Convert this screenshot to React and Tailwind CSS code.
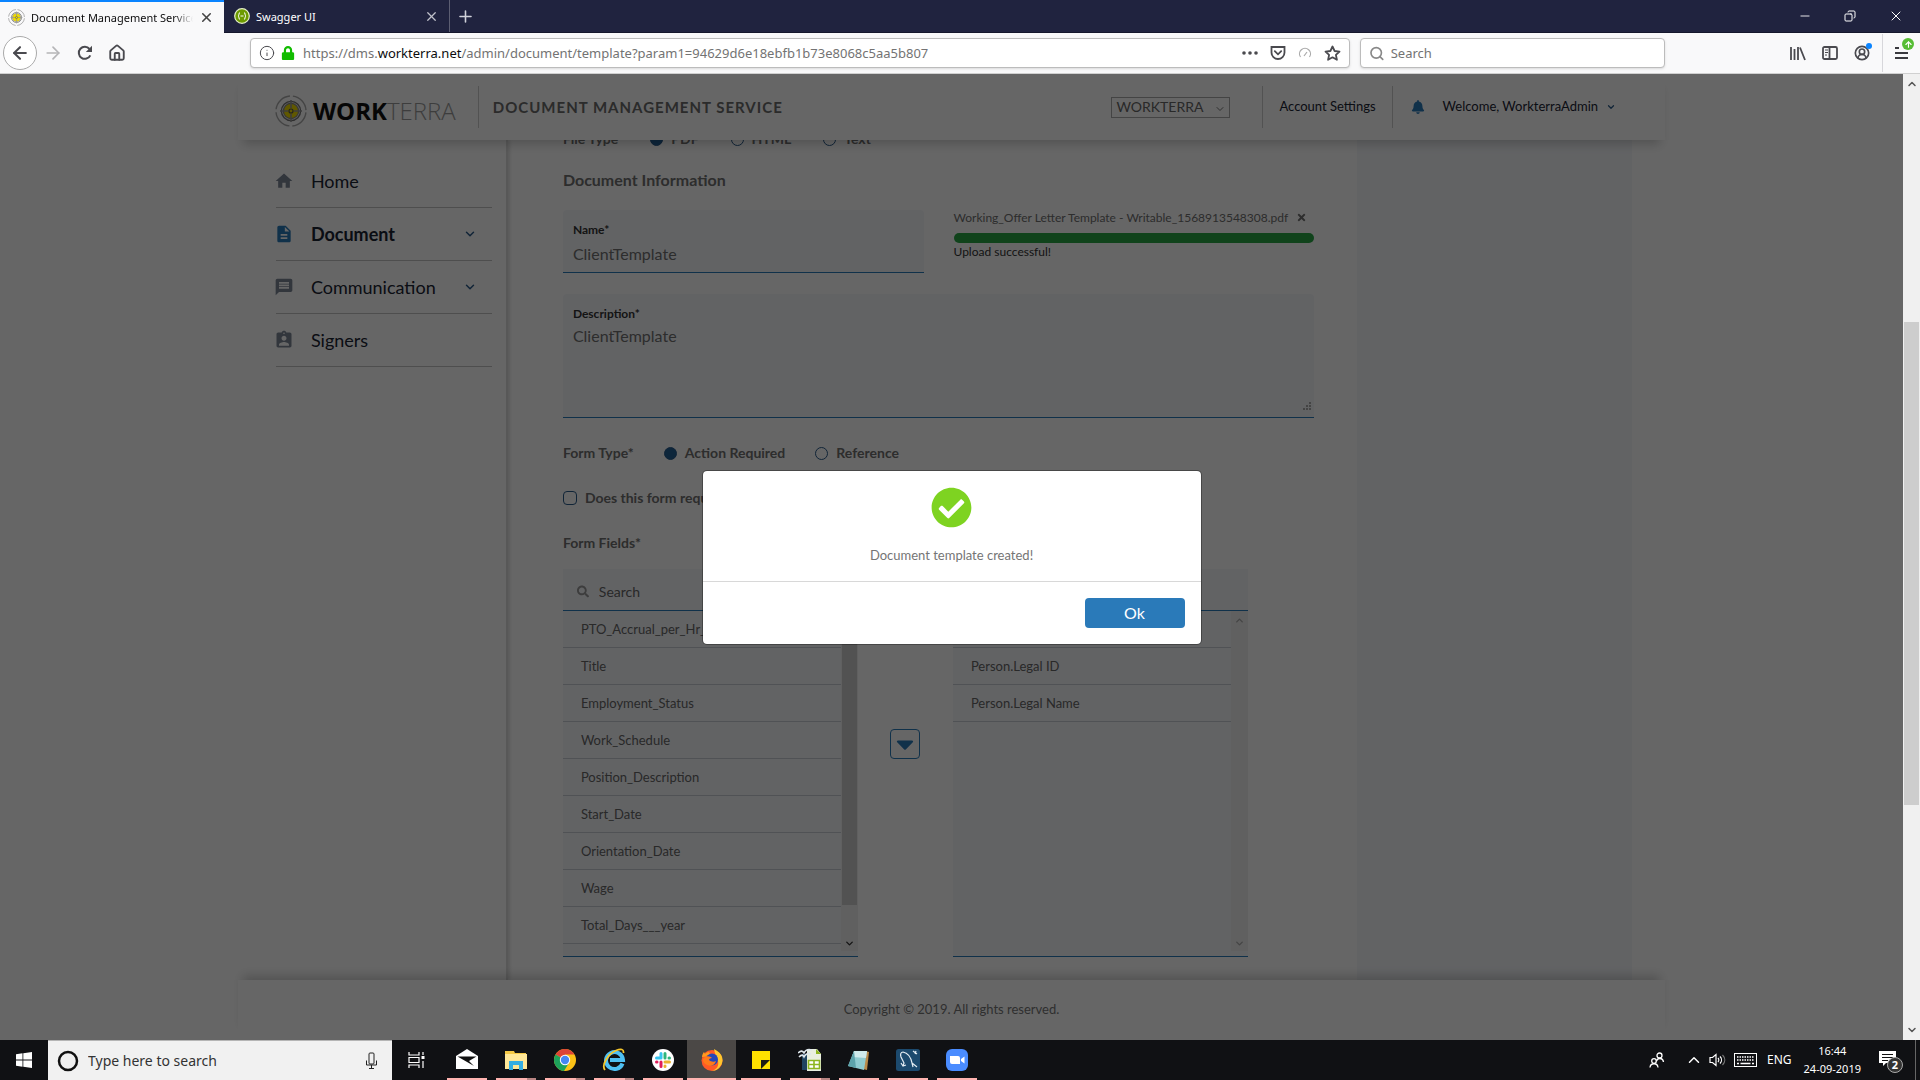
import { FaCheckCircle, FaBell, FaSearch, FaTimes, FaLock, FaCaretDown } from 'react-icons/fa'
import { MdHome, MdDescription, MdMessage, MdAssignmentInd } from 'react-icons/md'
import { ArrowLeft, ArrowRight, House, Plus, X, Info, Search, ChevronDown, ChevronUp, CircleUserRound, Minus, ArrowUp, Copy } from 'lucide-react'

const fields = ['PTO_Accrual_per_Hr_Worked', 'Title', 'Employment_Status', 'Work_Schedule', 'Position_Description', 'Start_Date', 'Orientation_Date', 'Wage', 'Total_Days___year']
const selected = ['Person.Email', 'Person.Legal ID', 'Person.Legal Name']

const menu = [
  { name: 'Home', icon: MdHome },
  { name: 'Document', icon: MdDescription, active: true, sub: true },
  { name: 'Communication', icon: MdMessage, sub: true },
  { name: 'Signers', icon: MdAssignmentInd },
]

function Target({ size, ring }) {
  return (
    <svg width={size} height={size} viewBox="0 0 32 32" fill="none" aria-hidden="true">
      <circle cx="16" cy="16" r="15" stroke={ring} strokeWidth="1.4" strokeDasharray="20.5 3.06" strokeDashoffset="-1.5" />
      <circle cx="16" cy="16" r="9.6" stroke="#777" strokeWidth="1.4" />
      <circle cx="16" cy="16" r="7.6" fill="#f0dc00" stroke="#888" strokeWidth="1.2" />
      <path d="M16 5v8M16 19v8M5 16h8M19 16h8" stroke="#999" strokeWidth="1.6" />
      <circle cx="16" cy="16" r="2" fill="#f0dc00" stroke="#555" strokeWidth="1.2" />
    </svg>
  )
}

function BrowserTabs() {
  return (
    <div className="flex h-[33px] shrink-0 items-stretch border-b border-[#15172c] bg-[#20233f] text-[11px]">
      <div className="-mb-px flex w-56 items-center gap-1.5 border-t-2 border-[#0a84ff] bg-[#f9f9fa] pl-2 pr-2.5 text-[#0c0c0d]">
        <Target size={17} ring="#999" />
        <span className="flex-1 overflow-hidden whitespace-nowrap pt-0.5 [mask-image:linear-gradient(to_right,black_88%,transparent)]">Document Management Service</span>
        <button aria-label="Close tab"><X size={15} strokeWidth={2.5} color="#444" /></button>
      </div>
      <div className="flex w-[226px] items-center gap-1.5 border-r border-[#5c5e72] pl-2.5 pr-2.5 text-white">
        <svg width="16" height="16" viewBox="0 0 16 16" fill="none" aria-hidden="true">
          <circle cx="8" cy="8" r="7.3" fill="#6d9a00" stroke="#e6f0c8" strokeWidth="1.2" />
          <path d="M6 4.5c-1.5 0-.5 3-2 3.500 1.500.5.5 3.500 2 3.500M10 4.500c1.500 0 .5 3 2 3.500-1.500.5-.5 3.500-2 3.500M6.500 8h3" stroke="#fff" />
        </svg>
        <span className="flex-1 pt-0.5">Swagger UI</span>
        <button aria-label="Close tab"><X size={15} strokeWidth={2} color="#c0c1ca" /></button>
      </div>
      <button aria-label="New tab" className="px-1.5 text-[#d0d1da]"><Plus size={19} strokeWidth={2} /></button>
      <div className="ml-auto flex items-center gap-8 pr-4 text-white">
        <button aria-label="Minimize"><Minus size={14} strokeWidth={1.5} /></button>
        <button aria-label="Restore"><Copy size={12} strokeWidth={2} className="-scale-x-100" /></button>
        <button aria-label="Close"><X size={16} strokeWidth={1.5} /></button>
      </div>
    </div>
  )
}

function BrowserBar() {
  return (
    <div className="flex h-[41px] shrink-0 items-center border-b border-[#d0d0d0] bg-[#f9f9fa] pl-[3px] text-[13px] text-[#4a4a4f]">
      <button aria-label="Back" className="flex size-[34px] items-center justify-center rounded-full border border-[#aaa] bg-white"><ArrowLeft size={20} strokeWidth={2.5} /></button>
      <button aria-label="Forward" className="ml-1.5 text-[#b5b5b7]"><ArrowRight size={20} /></button>
      <button aria-label="Reload" className="ml-3.5">
        <svg width="16" height="16" viewBox="0 0 16 16" fill="none" stroke="#4a4a4f" strokeWidth="2" aria-hidden="true">
          <path d="M13.300 10.300A6 6 0 1 1 12.500 4" />
          <path d="M15 .8V7H8.800z" fill="#4a4a4f" stroke="none" />
        </svg>
      </button>
      <button aria-label="Home page" className="ml-[15px]"><House size={18} strokeWidth={2.5} /></button>
      <div className="ml-[124px] flex h-[30px] flex-1 items-center rounded-sm border border-[#bcbcbc] bg-white px-2 shadow-sm">
        <Info size={16} strokeWidth={1.5} />
        <FaLock size={14} color="#12bc00" className="mx-1.5" />
        <div role="textbox" aria-label="Address" className="flex-1 pl-0.5 pt-0.5 text-[#737373]">
          https://dms.<span className="text-[#0c0c0d]">workterra.net</span>/admin/document/template?param1=94629d6e18ebfb1b73e8068c5aa5b807
        </div>
        <div className="flex items-center gap-3">
          <svg width="16" height="4" viewBox="0 0 16 4" fill="#4a4a4f" aria-hidden="true"><circle cx="2" cy="2" r="1.800" /><circle cx="8" cy="2" r="1.800" /><circle cx="14" cy="2" r="1.800" /></svg>
          <svg width="16" height="16" viewBox="0 0 16 16" fill="none" stroke="#4a4a4f" strokeWidth="1.800" aria-hidden="true">
            <path d="M1.500 2h13v5.500a6.500 6.500 0 0 1-13 0z" />
            <path d="M4.800 6.200 8 9.300l3.200-3.100" strokeLinecap="round" />
          </svg>
          <svg width="14" height="14" viewBox="0 0 14 14" fill="none" stroke="#aaa" strokeWidth="1.200" aria-hidden="true">
            <path d="M2.500 11a5.500 5.500 0 1 1 9 0M6 10l3-4" />
          </svg>
          <svg width="17" height="17" viewBox="0 0 17 17" fill="none" stroke="#4a4a4f" strokeWidth="1.800" strokeLinejoin="round" aria-hidden="true">
            <path d="m8.500 1.500 2.100 4.500 4.900.6-3.600 3.300 1 4.900-4.400-2.500-4.400 2.500 1-4.900L1.500 6.600l4.900-.6z" />
          </svg>
        </div>
      </div>
      <div className="ml-2.5 flex h-[30px] w-[305px] items-center gap-1.5 rounded-sm border border-[#bcbcbc] bg-white px-2 shadow-sm">
        <Search size={17} strokeWidth={2.5} color="#888" />
        <input aria-label="Search the web" placeholder="Search" className="w-full pt-0.5 outline-none placeholder:text-[#737373]" />
      </div>
      <div className="ml-[124px] flex items-center">
        <svg width="17" height="15" viewBox="0 0 17 15" fill="none" stroke="#4a4a4f" strokeWidth="1.800" aria-hidden="true">
          <path d="M2 1v13M5.500 3v11M9 1v13M11 1.500l5 12.500" />
        </svg>
        <svg width="16" height="14" viewBox="0 0 16 14" fill="none" stroke="#4a4a4f" strokeWidth="1.800" aria-hidden="true" className="ml-4">
          <rect x="1" y="1" width="14" height="12" rx="1.500" />
          <path d="M7.500 1v12" />
          <path d="M3 4h3M3 6.500h3M3 9h2" strokeWidth="1" />
        </svg>
        <span className="relative ml-4">
          <CircleUserRound size={16} strokeWidth={2.5} />
          <i className="absolute -right-0.5 -top-0.5 size-1.5 rounded-full bg-[#0a84ff]" />
        </span>
        <span className="relative ml-3 border-l border-[#d7d7db] py-3 pl-3 pr-3">
          <svg width="13" height="14" viewBox="0 0 13 14" fill="#3a3a3f" aria-hidden="true"><path d="M0 1h4v2H0zM0 6h13v2H0zM0 11h13v2H0z" /></svg>
          <i className="absolute right-1.5 top-1 flex size-3 items-center justify-center rounded-full bg-[#57bd35]"><ArrowUp size={9} strokeWidth={3} color="#fff" /></i>
        </span>
      </div>
    </div>
  )
}

function Header() {
  return (
    <header className="relative z-10 flex h-[66px] items-center bg-white pl-[37px] shadow-[0_9px_10px_-5px_rgba(0,0,0,0.2)]">
      <div className="flex items-center pt-2">
        <Target size={32} ring="#aaa" />
        <span className="ml-1.5 font-['Open_Sans',sans-serif] text-2xl leading-8 text-[#999]"><b className="text-[#111]">WORK</b><span className="font-light">TERRA</span></span>
      </div>
      <h1 className="ml-[22px] flex h-[42px] items-center border-l border-[#ccc] pl-3.5 text-[15px] font-bold tracking-[1px] text-[#6b6b6b]">DOCUMENT MANAGEMENT SERVICE</h1>
      <div className="ml-auto flex items-center pr-[49px] text-[13px] text-[#1b2433]">
        <span className="relative mr-8">
          <select aria-label="Client" className="block h-[21px] w-[119px] appearance-none border border-[#aaa] px-1 text-sm leading-none text-[#666]">
            <option>WORKTERRA</option>
          </select>
          <ChevronDown size={12} color="#777" className="absolute right-1 top-1.5" />
        </span>
        <a href="#account" className="flex h-[42px] items-center border-x border-[#ccc] px-4">Account Settings</a>
        <FaBell size={14} color="#2a7ab9" className="ml-[18px]" />
        <button className="ml-[18px] flex items-center gap-2">Welcome, WorkterraAdmin <ChevronDown size={10} color="#2a5a8a" strokeWidth={3} /></button>
      </div>
    </header>
  )
}

function Sidebar() {
  return (
    <nav className="w-[270px] shrink-0 border-r-2 border-[#ddd] pl-[38px] pr-3.5 pt-[15px] shadow-[2px_0_3px_rgba(0,0,0,0.12)]">
      {menu.map(m => (
        <a key={m.name} href={`#${m.name}`} className={`flex h-[53px] items-center border-b border-[#c4c4c4] text-lg text-[#1b2433] ${m.active ? 'font-bold' : ''}`}>
          <m.icon size={20} color={m.active ? '#2a7ab9' : '#7d8797'} className="-ml-0.5" />
          <span className="ml-[17px] flex-1">{m.name}</span>
          {m.sub && <ChevronDown size={14} color="#2a5a8a" strokeWidth={2.5} className="mr-[15px]" />}
        </a>
      ))}
    </nav>
  )
}

function Radio({ name, label, checked }) {
  return (
    <label className="flex items-center gap-2">
      <input type="radio" name={name} defaultChecked={checked} className="size-[13px] appearance-none rounded-full border border-[#2a5a8a] checked:bg-[#215f95]" />
      {label}
    </label>
  )
}

function FieldList({ label, items, thumb }) {
  return (
    <div className="w-[295px] bg-[#f5f7fb]">
      <div className="flex h-[42px] items-center gap-2.5 border-b border-[#2a7ab9] pl-3.5 pt-1">
        <FaSearch size={13} color="#999" />
        <input aria-label={label} placeholder="Search" className="w-full text-sm outline-none placeholder:text-[#666]" />
      </div>
      <div className="flex h-[346px] border-b border-[#2a7ab9] pb-[5px]">
        <ul className="flex-1 overflow-hidden text-[13px] text-[#666]">
          {items.map(f => <li key={f} className="flex h-[37px] items-center border-b border-[#c8ccd4] pl-[18px]">{f}</li>)}
        </ul>
        <div className="flex w-[17px] flex-col items-center bg-[#f0f0f0]">
          <ChevronUp size={11} strokeWidth={3} color="#aaa" className="my-1 shrink-0" />
          {thumb && <div className="h-[275px] w-[15px] shrink-0 bg-[#cdcdcd]" />}
          <ChevronDown size={11} strokeWidth={3} color={thumb ? '#333' : '#aaa'} className="mb-0.5 mt-auto shrink-0" />
        </div>
      </div>
    </div>
  )
}

function TemplateForm() {
  return (
    <form className="-mt-[11px] min-w-0 flex-1 pl-[55px] pr-[43px] text-sm text-[#707070]">
      <div className="flex h-5 items-center gap-8 font-bold">
        <span>File Type</span>
        <Radio name="file" label="PDF" checked />
        <Radio name="file" label="HTML" />
        <Radio name="file" label="Text" />
      </div>
      <h2 className="mt-[19px] text-base font-bold leading-6">Document Information</h2>
      <div className="mt-[18px] grid grid-cols-2 gap-[30px]">
        <label className="flex h-[63px] min-w-0 flex-col rounded-t border-b border-[#2a7ab9] bg-[#f5f7fb] px-2.5 pt-3">
          <span className="text-xs font-bold leading-4 text-[#333]">Name*</span>
          <input defaultValue="ClientTemplate" className="h-[31px] w-full text-base outline-none" />
        </label>
        <div className="min-w-0 text-xs">
          <p className="flex h-[15px] items-center gap-2 whitespace-nowrap">Working_Offer Letter Template - Writable_1568913548308.pdf <button type="button" aria-label="Remove file"><FaTimes size={11} /></button></p>
          <div className="mt-2 h-2.5 rounded-full bg-[#28a745]" />
          <p className="mt-px h-4 text-[#333]">Upload successful!</p>
        </div>
      </div>
      <label className="relative mt-[21px] flex h-[124px] flex-col rounded-t border-b border-[#2a7ab9] bg-[#f5f7fb] px-2.5 pt-3">
        <span className="text-xs font-bold leading-4 text-[#333]">Description*</span>
        <textarea defaultValue="ClientTemplate" className="mt-0.5 w-full flex-1 resize-none text-base leading-6 outline-none" />
        <svg width="9" height="9" viewBox="0 0 9 9" fill="#aaa" aria-hidden="true" className="absolute bottom-1.5 right-0.5">
          <path d="M6 0h2v2H6zM6 3h2v2H6zM6 6h2v2H6zM3 3h2v2H3zM3 6h2v2H3zM0 6h2v2H0z" />
        </svg>
      </label>
      <div className="mt-[25px] flex h-5 items-center gap-[30px] font-bold">
        <span>Form Type*</span>
        <Radio name="type" label="Action Required" checked />
        <Radio name="type" label="Reference" />
      </div>
      <label className="mt-[25px] flex h-5 items-center gap-2 font-bold">
        <input type="checkbox" className="size-[14px] appearance-none rounded-sm border border-[#2a5a8a]" />
        Does this form require signature?
      </label>
      <h3 className="mt-[25px] font-bold leading-5">Form Fields*</h3>
      <div className="mt-4 flex">
        <FieldList label="Search fields" items={fields} thumb />
        <div className="flex w-[95px] items-center justify-center">
          <button type="button" aria-label="Map fields" className="mb-[38px] flex size-[30px] items-center justify-center rounded-sm border border-[#2a7ab9] text-[#2a7ab9]"><FaCaretDown size={28} /></button>
        </div>
        <FieldList label="Search mapped fields" items={selected} />
      </div>
    </form>
  )
}

function Dialog() {
  return (
    <div className="absolute inset-0 z-20 flex items-start justify-center bg-black/60">
      <div role="dialog" aria-label="Document template created" className="mt-[396px] w-[500px] rounded-[5px] border border-black/30 bg-white bg-clip-padding text-[#757575]">
        <div className="flex h-[111px] flex-col items-center border-b border-[#d8d8d8] pt-4">
          <FaCheckCircle size={41} color="#7ed321" />
          <p className="mt-[17px] text-[13px] leading-5">Document template created!</p>
        </div>
        <div className="flex justify-end px-4 py-4">
          <button className="h-[30px] w-[100px] rounded-[4px] bg-[#2a7ab9] text-base text-white">Ok</button>
        </div>
      </div>
    </div>
  )
}

const apps = [
  {
    name: 'Mail', open: 1,
    icon: <><path d="M1 8 12 1l11 7v13H1z" fill="#fff" /><path d="M2.500 8.500h19L14 13l5 5z" fill="#111" /></>,
  },
  {
    name: 'File Explorer', open: 2,
    icon: <><path d="M1 3h9l1 2h11v16H1z" fill="#f5c945" /><path d="M1 6h22v15H1z" fill="#ffe797" /><path d="M5 13h14v9h-4v-5H9v5H5z" fill="#35aee2" /></>,
  },
  {
    name: 'Chrome', open: 2,
    icon: <><circle cx="12" cy="12" r="11" fill="#fbc116" /><path d="M12 12 2.500 6.500A11 11 0 0 1 21.500 6.500H12z" fill="#dc4437" /><path d="M12 12 2.500 6.500A11 11 0 0 0 11 23l5.500-9z" fill="#1da25a" /><circle cx="12" cy="12" r="5.200" fill="#fff" /><circle cx="12" cy="12" r="4.200" fill="#4587f4" /></>,
  },
  {
    name: 'Internet Explorer', open: 2,
    icon: <><path d="M20.500 15.500A8.500 8.500 0 1 1 21 12H8" fill="none" stroke="#4fc0f2" strokeWidth="4" /><path d="M3 22C-1 17 6 6 14 2.500c5-2 8-1.500 7.500 2.500" fill="none" stroke="#f6c62b" strokeWidth="1.800" /></>,
  },
  {
    name: 'Slack', open: 1,
    icon: <><circle cx="12" cy="12" r="11" fill="#fff" /><g strokeWidth="3" strokeLinecap="round"><path d="M10 5.500V10M5.500 10H10" stroke="#36c5f0" /><path d="M14 5.500V10M18.500 10h-.5" stroke="#2eb67d" /><path d="M14 14h4.500M14 18.500v-.5" stroke="#ecb22e" /><path d="M10 14v4.500M5.500 14H6" stroke="#e01e5a" /></g></>,
  },
  {
    name: 'Firefox', open: 1, active: true,
    icon: <><circle cx="12" cy="12.500" r="10.500" fill="#ff5a26" /><path d="M14 1c6 3 9 7 8.500 12S17 23 12 23c5-2 7-5 6-10s-3-6-4-12" fill="#ffc62e" /><path d="M2 9C2 6 4 4 4 4l1 2c2-2 4-2 4-2l2 4z" fill="#ff9a1f" /><circle cx="12" cy="11.500" r="6" fill="#2547b8" /><path d="M3 11c3-4 7-3 9-1-2 0-3 1-3 2 2 2 5 2 7 1-1 4-5 6-9 4s-4-4-4-6" fill="#ff7a1a" /></>,
  },
  {
    name: 'Sticky Notes', open: 1,
    icon: <><path d="M3 3h18v10l-8 8H3z" fill="#ffe100" /><path d="M21 12v9h-9z" fill="#ffe100" /><path d="M12 21v-9h9z" fill="#1c1c14" /></>,
  },
  {
    name: 'OpenOffice Calc', open: 2,
    icon: <><path d="M4 6h9v16H4z" fill="#1f4460" /><path d="M9 1h10l4 5v17H9z" fill="#e9efe0" /><path d="M18 1v5h5z" fill="#8db61f" /><path d="M10.500 12.500h11v8h-11zM16 12.500v8M10.500 16.500h11" stroke="#8db61f" strokeWidth="1.600" fill="#fff" /><path d="M0 5c3-3 5-2 6 0 2-4 5-4 8-3M1 9c3-3 4-2 5 0 2-4 4-4 7-3" stroke="#dfe7ec" strokeWidth="1.600" fill="none" /></>,
  },
  {
    name: 'Notepad', open: 1,
    icon: <><path d="m18 3 4 1-2 18-4-1z" fill="#b98a4a" /><path d="M7 3h13l-3 19L1 18z" fill="#8fcbd0" /><path d="M7 3h13l-1 7L5 9z" fill="#cfeaec" /><path d="m7 3-6 15 8 2z" fill="#5da3ab" /></>,
  },
  {
    name: 'MySQL Workbench', open: 1,
    icon: <><rect x="0" y="1" width="24" height="22" rx="2.500" fill="#1c4a6e" /><path d="M7 18 8 15 5 9c-1-3 0-5 2-5 5 1 8 6 9 11l5 4M5 15l2 3 3-1M16 15l1 4M17 3l4 3M20 3l-1 3" stroke="#e4edf3" strokeWidth="1.200" fill="none" /></>,
  },
  {
    name: 'Zoom', open: 1,
    icon: <><rect x="1" y="1" width="22" height="22" rx="6" fill="#4a8cff" /><path d="M5 8h8a2 2 0 0 1 2 2v6H7a2 2 0 0 1-2-2zM16 11l3.500-2.500v7L16 13z" fill="#fff" /></>,
  },
]

function Taskbar() {
  return (
    <footer className="flex h-10 shrink-0 items-stretch bg-[#101114] text-xs text-white">
      <button aria-label="Start" className="flex w-12 items-center justify-center">
        <svg width="16" height="16" viewBox="0 0 16 16" fill="#fff" aria-hidden="true"><path d="M0 2.200 6.500 1.300v6.300H0zM7.300 1.200 16 0v7.600H7.300zM0 8.400h6.500v6.300L0 13.800zM7.300 8.400H16V16l-8.700-1.200z" /></svg>
      </button>
      <div className="flex w-[344px] items-center border-t border-[#b5b5b5] bg-[#f1f1f1] pl-2 pr-3.5">
        <svg width="24" height="24" viewBox="0 0 24 24" fill="none" aria-hidden="true"><circle cx="12" cy="12" r="9" stroke="#111" strokeWidth="2.500" /></svg>
        <input aria-label="Type here to search" placeholder="Type here to search" className="ml-2 flex-1 text-sm outline-none placeholder:text-[#333]" />
        <svg width="13" height="18" viewBox="0 0 13 18" fill="none" stroke="#222" aria-hidden="true"><rect x="4" y="1" width="5" height="11" rx="1" /><path d="M1.500 8.500V13h10V8.500M6.500 13v3.500M4 16.500h5" /></svg>
      </div>
      <button aria-label="Task view" className="flex w-[50px] items-center justify-center">
        <svg width="18" height="18" viewBox="0 0 18 18" fill="none" stroke="#fff" strokeWidth="1.200" aria-hidden="true"><path d="M1 1v3h10V1M1 17v-3h10v3M1 6.500h10v5H1zM15 1v3M15 10v7" /><path d="M13.500 5h3v3h-3z" fill="#fff" stroke="none" /></svg>
      </button>
      {apps.map(a => (
        <button key={a.name} aria-label={a.name} className={`flex w-[49px] flex-col items-center ${a.active ? 'bg-[#4b4846]' : ''}`}>
          <svg width="24" height="24" viewBox="0 0 24 24" fill="none" className="mt-2" aria-hidden="true">{a.icon}</svg>
          <span className={`mt-auto flex h-0.5 ${a.active ? 'w-full' : 'w-10'}`}>
            <i className="flex-1 bg-[#ffb3b0]" />
            {a.open === 2 && <i className="w-[9px] bg-[#b98583]" />}
          </span>
        </button>
      ))}
      <div className="ml-auto flex items-center">
        <svg width="16" height="16" viewBox="0 0 16 16" fill="none" stroke="#fff" strokeWidth="1.300" aria-hidden="true"><circle cx="10.500" cy="3.500" r="2.500" /><path d="M7.500 9c1-3.500 6.500-3.500 7 1" /><circle cx="5" cy="9" r="2.300" /><path d="M1 15.500c.5-5 7.500-5 8 0" /></svg>
        <ChevronUp size={18} strokeWidth={2} className="ml-5" />
        <svg width="17" height="14" viewBox="0 0 17 14" fill="none" stroke="#fff" strokeWidth="1.200" className="ml-1.5" aria-hidden="true"><path d="M1 4.500h2.500L7 1.500v11l-3.500-3H1zM9 5c1 1 1 3 0 4M11 3.500c2 2 2 5 0 7" /><path d="M13.500 2c3 3 3 7 0 10" stroke="#777" /></svg>
        <svg width="23" height="14" viewBox="0 0 23 14" fill="none" stroke="#fff" className="ml-2" aria-hidden="true"><rect x=".5" y=".5" width="22" height="13" /><path d="M3 4h17M3 7h17" strokeDasharray="1.500 1" strokeWidth="1.300" /><path d="M3 10.500h2M6.500 10.500h10M18 10.500h2" strokeWidth="1.300" /></svg>
        <span className="ml-2.5">ENG</span>
        <span className="ml-3 flex flex-col items-center text-[11px] leading-[18px]"><span>16:44</span><span>24-09-2019</span></span>
        <span className="relative ml-[18px] mr-3">
          <svg width="24" height="26" viewBox="0 0 24 26" fill="none" aria-hidden="true"><path d="M0 4h17v12H7l-3 3v-3H0z" fill="#fff" /><path d="M3 7.500h11M3 10.500h11M3 13.500h6" stroke="#111" strokeWidth="1.200" /></svg>
          <i className="absolute bottom-0 right-0 flex size-4 items-center justify-center rounded-full border border-[#aaa] bg-[#333] text-[11px] font-bold not-italic">2</i>
        </span>
        <div className="h-full w-[5px] border-l border-[#666]" />
      </div>
    </footer>
  )
}

export default function App() {
  return (
    <div className="flex h-screen flex-col overflow-hidden font-['Noto_Sans',sans-serif]">
      <BrowserTabs />
      <BrowserBar />
      <div className="flex min-h-0 flex-1">
        <div className="relative flex-1 bg-white font-[Lato,sans-serif]">
          <div className="mx-auto flex h-full w-3/4 flex-col">
            <Header />
            <div className="flex min-h-0 flex-1 overflow-hidden">
              <Sidebar />
              <TemplateForm />
              <aside className="mr-[33px] w-[275px] bg-[#f5f7fb]" />
            </div>
            <div className="relative flex h-[60px] items-center justify-center bg-white text-[13px] text-[#777] shadow-[0_-9px_10px_-5px_rgba(0,0,0,0.2)]">Copyright © 2019. All rights reserved.</div>
          </div>
          <Dialog />
        </div>
        <div className="flex w-[17px] flex-col items-center justify-between bg-[#f0f0f0] text-[#555]">
          <ChevronUp size={12} strokeWidth={3} className="my-1" />
          <div className="mt-3 h-1/2 w-[15px] bg-[#cdcdcd]" />
          <ChevronDown size={12} strokeWidth={3} className="my-1" />
        </div>
      </div>
      <Taskbar />
    </div>
  )
}
